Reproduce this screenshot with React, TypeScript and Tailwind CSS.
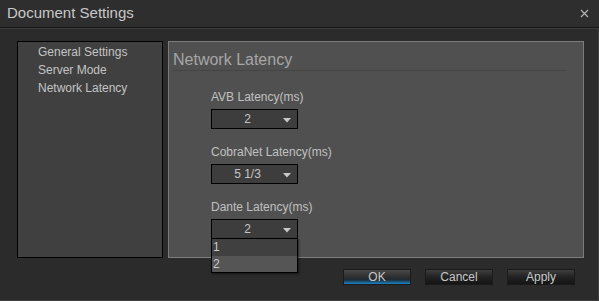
const navItems = ["General Settings", "Server Mode", "Network Latency"];

const latencies = [
  { label: "AVB Latency(ms)", value: "2" },
  { label: "CobraNet Latency(ms)", value: "5 1/3" },
  { label: "Dante Latency(ms)", value: "2", open: true },
];

function Caret() {
  return (
    <svg width="8" height="5" viewBox="0 0 8 5" className="absolute right-[6px] top-[8px]">
      <path d="M0 0h8L4 4.5z" fill="#c8c8c8" />
    </svg>
  );
}

function LatencySelect({ value, open }: { value: string; open?: boolean }) {
  return (
    <div className="relative w-[87px]">
      <div className="relative flex h-[20px] items-center justify-center border border-black bg-[#3d3d3d] pr-[14px] text-[12px] text-[#c4c4c4]">
        {value}
        <Caret />
      </div>
      {open ? (
        <div className="absolute left-0 top-[19px] z-10 w-[87px] border border-black bg-[#404040] text-[12px] text-[#c8c8c8] shadow-[1px_1px_2px_rgba(0,0,0,0.5)]">
          <div className="h-[17px] px-[1px] leading-[17px]">1</div>
          <div className="h-[16px] bg-[#555555] px-[1px] leading-[16px]">2</div>
        </div>
      ) : null}
    </div>
  );
}

function DialogButton({ label, primary }: { label: string; primary?: boolean }) {
  return (
    <button
      className={
        primary
          ? "h-[16px] w-[68px] border border-[#1a1a1a] bg-[linear-gradient(#4a4a4a,#303030_45%,#1e2a33_70%,#1b86c8)] text-[12px] leading-[14px] text-[#c8c8c8]"
          : "h-[16px] w-[68px] border border-[#1a1a1a] bg-[linear-gradient(#3e3e3e,#222222_50%,#151515)] text-[12px] leading-[14px] text-[#c8c8c8]"
      }
    >
      {label}
    </button>
  );
}

export default function App() {
  return (
    <div className="flex h-[301px] w-[599px] flex-col bg-[#2c2c2c] font-['Liberation_Sans',sans-serif]">
      <div className="flex h-[28px] items-center justify-between border-b border-[#161616] bg-[#2e2e2e] pl-[7px] pr-[10px]">
        <span className="text-[15px] text-[#c8c8c8]">Document Settings</span>
        <svg width="9" height="9" viewBox="0 0 9 9">
          <path d="M1 1l7 7M8 1l-7 7" stroke="#b4b4b4" strokeWidth="1.2" />
        </svg>
      </div>
      <div className="flex flex-1 flex-col border-r border-b border-t border-[#3e3e3e] bg-[#2b2b2b] pl-[17px] pt-[12px]">
        <div className="flex gap-[5px]">
          <div className="h-[217px] w-[146px] border border-black bg-[#404040] pl-[20px] pt-[1px]">
            {navItems.map((item) => (
              <div key={item} className="h-[18px] text-[12px] leading-[18px] text-[#c4c4c4]">
                {item}
              </div>
            ))}
          </div>
          <div className="h-[217px] w-[416px] border border-[#7c7c7c] bg-[#505050]">
            <div className="ml-[4px] mr-[16px] mt-[9px] border-b border-[#444444] pb-[1px] text-[16px] leading-[18px] text-[#a6a6a6]">
              Network Latency
            </div>
            <div className="ml-[42px] mt-[19px] flex flex-col gap-[16px]">
              {latencies.map((l) => (
                <div key={l.label} className="flex flex-col gap-[5px]">
                  <span className="text-[12px] leading-[14px] text-[#c0c0c0]">{l.label}</span>
                  <LatencySelect value={l.value} open={l.open} />
                </div>
              ))}
            </div>
          </div>
        </div>
        <div className="mt-[11px] flex justify-end gap-[14px] pr-[23px]">
          <DialogButton label="OK" primary />
          <DialogButton label="Cancel" />
          <DialogButton label="Apply" />
        </div>
      </div>
    </div>
  );
}
